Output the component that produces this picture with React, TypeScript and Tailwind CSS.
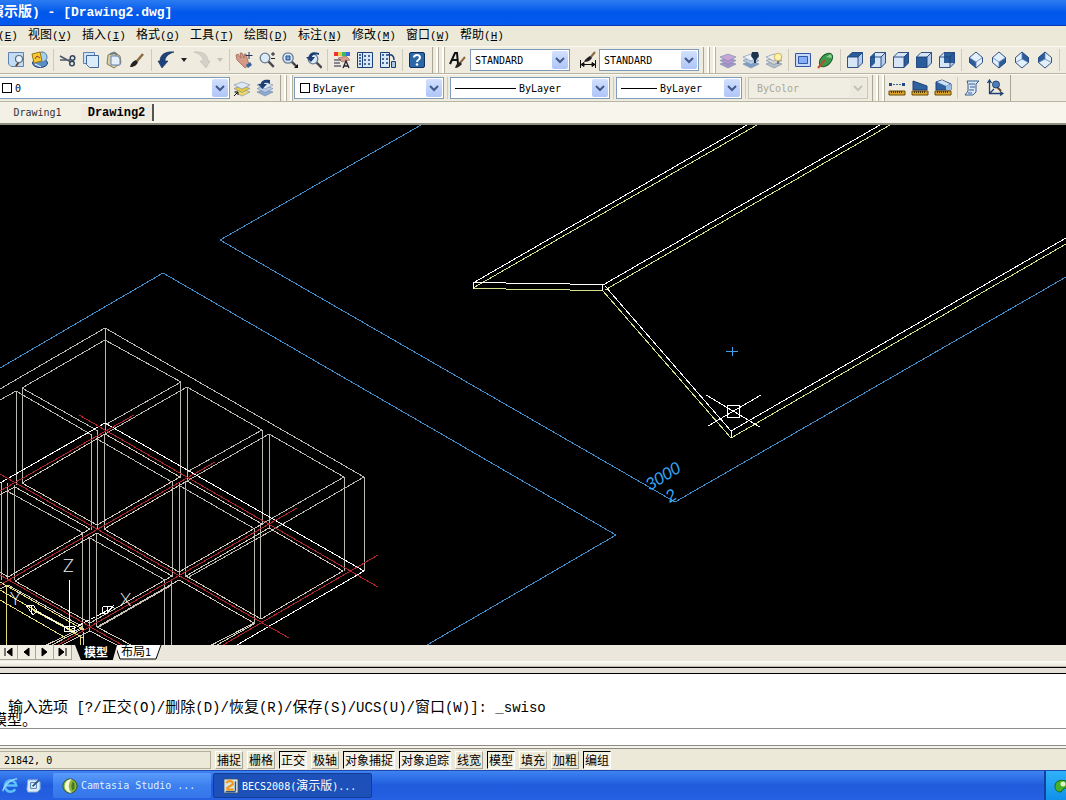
import React from "react";

const MONO = "font-['DejaVu_Sans_Mono','Noto_Sans_CJK_SC',monospace]";

/** Text that sets Chinese runs in their own size next to half-width Latin. */
function Mix({ text, cjk }: { text: string; cjk: string }) {
  return (
    <>
      {text.split(/([\u3000-\u9fff]+)/).map((part, i) =>
        i % 2 ? (
          <span key={i} className={cjk}>
            {part}
          </span>
        ) : (
          part
        ),
      )}
    </>
  );
}

const NAVY = "#1c3f78";
const STEEL = "#5d83b4";
const PALE = "#d6e6f6";
const DARK = "#2b5c9b";

function Cube({ face }: { face: string }) {
  return (
    <>
      <path d="M1.500 6 6 1.500H16.500V12L12 16.500H1.500Z" fill={PALE} />
      <path d="M12 6 16.500 1.500V12L12 16.500Z" fill={face === "right" ? DARK : "#b3cdea"} />
      {face === "top" && <path d="M1.500 6 6 1.500H16.500L12 6Z" fill={DARK} />}
      {face === "left" && <path d="M1.500 6 6 1.500V12L1.500 16.500Z" fill={DARK} />}
      {face === "front" && <path d="M1.500 6H12V16.500H1.500Z" fill={DARK} />}
      {face === "back" && <path d="M6 1.500H16.500V12H6Z" fill={DARK} />}
      <path
        d="M1.500 6 6 1.500H16.500V12L12 16.500H1.500ZM1.500 6H12V16.500M12 6 16.500 1.500"
        fill="none"
        stroke={NAVY}
        strokeWidth=".9"
      />
    </>
  );
}

function Iso({ face }: { face: string }) {
  return (
    <>
      <path d="M9 1 15.500 6.500V11.500L9 17 2.500 11.500V6.500Z" fill="#e3effa" />
      {face === "sw" && <path d="M2.500 7 9 11V17L2.500 11.500Z" fill={DARK} />}
      {face === "se" && <path d="M15.500 7 9 11V17L15.500 11.500Z" fill={DARK} />}
      {face === "ne" && <path d="M9 1 15.500 6.500V11.500L9 8Z" fill={DARK} />}
      {face === "nw" && <path d="M9 1 2.500 6.500V11.500L9 8Z" fill={DARK} />}
      {face[0] === "s" ? (
        <path d="M2.500 6.500 9 11 15.500 6.500M9 11V17" fill="none" stroke={STEEL} strokeWidth=".8" />
      ) : (
        <path d="M2.500 11.500 9 8 15.500 11.500M9 1V8" fill="none" stroke={STEEL} strokeWidth=".8" />
      )}
      <path d="M9 1 15.500 6.500V11.500L9 17 2.500 11.500V6.500Z" fill="none" stroke={NAVY} strokeWidth=".9" />
    </>
  );
}

function Stack({ a, b, c }: { a: string; b: string; c: string }) {
  return (
    <g stroke="#6f86ac" strokeWidth=".6">
      <path d="M1 13 9 10 17 13 9 17Z" fill={c} />
      <path d="M1 9.500 9 6.500 17 9.500 9 13.500Z" fill={b} />
      <path d="M1 6 9 3 17 6 9 10Z" fill={a} />
    </g>
  );
}

function Ruler() {
  return (
    <>
      <path d="M1 12H17V16H1Z" fill="#d9a52a" stroke="#6b4a08" />
      <path d="M3.500 12V14M5.500 12V14M7.500 12V14M9.500 12V14M11.500 12V14M13.500 12V14" stroke="#4f3604" />
    </>
  );
}

function Lens({ cx, cy, r }: { cx: number; cy: number; r: number }) {
  return (
    <>
      <path d={`M${cx + r * 0.7} ${cy + r * 0.7} L${cx + r + 4} ${cy + r + 4}`} stroke="#4a4a52" strokeWidth="2.400" />
      <circle cx={cx} cy={cy} r={r} fill="#dbeaf8" stroke="#6c7d92" strokeWidth="1.300" />
    </>
  );
}

const ICONS: Record<string, React.ReactNode> = {
  "Plot preview": (
    <>
      <path d="M1.500 1.500H16.500V15.500H4L1.500 13Z" fill="#c3dcf3" stroke={STEEL} />
      <path d="M12 11 9 15" stroke="#6a4526" strokeWidth="2" />
      <circle cx="12" cy="8" r="3.500" fill="#eaf4fd" stroke="#5a6d86" strokeWidth="1.200" />
    </>
  ),
  Publish: (
    <>
      <ellipse cx="10" cy="12" rx="7.500" ry="4.500" fill="#5b8fc8" stroke={NAVY} />
      <circle cx="12" cy="6" r="5" fill="#a8d2ea" stroke="#4a7aa8" />
      <path d="M2 3 10 1 12 10 4 12Z" fill="#f3c934" stroke="#957414" />
      <path d="M5 8 7 5 10 7" fill="none" stroke="#a13a20" />
      <path d="M5 13 11 16" stroke="#fff" />
    </>
  ),
  Cut: (
    <>
      <path d="M1 5 12 11M1 9H11" stroke="#505a68" strokeWidth="1.500" />
      <circle cx="13.500" cy="7" r="2.300" fill="none" stroke="#33445f" strokeWidth="1.500" />
      <circle cx="13" cy="12.500" r="2.300" fill="none" stroke="#33445f" strokeWidth="1.500" />
    </>
  ),
  Copy: (
    <>
      <path d="M1.500 1.500H12.500V12.500H1.500Z" fill="#cfe3f6" stroke={STEEL} />
      <path d="M4.500 4.500H16.500V16.500H7.500L4.500 13.500Z" fill="#dcebf9" stroke="#41699c" />
    </>
  ),
  Paste: (
    <>
      <path d="M3 4 9 1 15 5 16 12 9 17 2 13Z" fill="#d8cfa4" stroke="#8a7d52" />
      <path d="M6 5H13L15 8V14H6Z" fill="#e3eef8" stroke={STEEL} />
      <path d="M5 3 10 2 12 4" stroke="#6c7c8c" strokeWidth="2" fill="none" />
    </>
  ),
  "Match properties": (
    <>
      <path d="M9 10 15 3" stroke="#8c6a42" strokeWidth="2.500" />
      <path d="M2 16C3 12 5 10 8 9L10 11C9 14 6 16 2 16Z" fill="#222" />
    </>
  ),
  Undo: <path d="M17 1C8 0 3 4 3 10H1L5 17 11 10H8C8 6 11 3 17 1Z" fill="#20427c" stroke="#142c58" strokeWidth=".6" />,
  Redo: <path d="M1 1C10 0 15 4 15 10H17L13 17 7 10H10C10 6 7 3 1 1Z" fill="#d4d2c8" stroke="#bebcb1" strokeWidth=".6" />,
  Pan: (
    <>
      <path
        d="M1 4 3 3 6 7 5 2 7 2 9 7 9 3 11 3 13 10 14 14 10 17 6 13 2 9Z"
        fill="#d49a86"
        stroke="#9a5f50"
        strokeWidth=".7"
      />
      <path d="M11 14 15 11 17 14 13 17Z" fill="#34629e" />
      <path d="M14 1V8M10.500 4.500H17.500" stroke="#23395a" />
    </>
  ),
  "Zoom realtime": (
    <>
      <Lens cx={7} cy={7} r={4.8} />
      <path d="M15 1V5M13 3H17M13 7.500H17" stroke="#222" />
    </>
  ),
  "Zoom window": (
    <>
      <Lens cx={7} cy={7} r={5.2} />
      <path d="M5 5H9V9H5Z" fill="#7da4d6" stroke="#274f8c" />
      <path d="M17 13V17H13Z" fill="#111" />
    </>
  ),
  "Zoom previous": (
    <>
      <Lens cx={9} cy={8} r={4.8} />
      <path d="M15 2C9 0 5 2 5 6H2L7 11 11 6H8C8 4 11 3 15 4Z" fill={NAVY} />
    </>
  ),
  Properties: (
    <>
      <path d="M1 1H5V5H1Z" fill="#e33" />
      <path d="M5 1H9V5H5Z" fill="#ec4" />
      <path d="M9 1H13V5H9Z" fill="#3b6" />
      <path d="M13 1H17V5H13Z" fill="#46d" />
      <path d="M5 7 13 5 17 9 9 11Z" fill="#d8a08c" stroke="#93604f" strokeWidth=".6" />
      <path d="M1 9H8M1 12H7M1 15H8" stroke="#667" strokeWidth="1.500" />
      <path d="M10 17 13 10 16 17M11 15H15" stroke="#223" strokeWidth="1.300" fill="none" />
    </>
  ),
  "Design center": (
    <>
      <path d="M1.500 1.500H16.500V16.500H1.500Z" fill="#d9e9f8" stroke={NAVY} />
      <path d="M6.500 2V16" stroke={NAVY} />
      <path
        d="M3 4H5M3 7H5M3 10H5M3 13H5M8 5H10M12 5H14M8 9H10M12 9H14M8 13H10M12 13H14"
        stroke={NAVY}
        strokeWidth="1.500"
      />
    </>
  ),
  "Tool palettes": (
    <>
      <path d="M1.500 1.500H10.500V16.500H1.500Z" fill="#d9e9f8" stroke={NAVY} />
      <path d="M3 4H5M3 8H5M3 12H5M7 4H9M7 8H9M7 12H9" stroke={NAVY} strokeWidth="1.500" />
      <path d="M9 4C13 3 15 5 15 9" fill="none" stroke={NAVY} strokeWidth="1.500" />
      <path d="M12.500 10.500H16.500V16.500H12.500Z" fill="#a8c6e6" stroke={NAVY} />
    </>
  ),
  Help: (
    <>
      <rect x="1.500" y="1.500" width="15" height="15" rx="1.500" fill="#2a66a8" stroke="#12315e" />
      <path d="M6 6.500C6 3 12 3 12 6.500C12 9 9 8.500 9 11" fill="none" stroke="#fff" strokeWidth="2" />
      <circle cx="9" cy="13.500" r="1.300" fill="#fff" />
    </>
  ),
  "Text style": (
    <>
      <path d="M2 13 7 2H9L10 13M4 9H10" fill="none" stroke="#111" strokeWidth="2" />
      <path d="M12 12 17 6" stroke="#8c6a42" strokeWidth="2" />
      <path d="M7 17C8 13 10 12 12 11L14 13C12 15 10 17 7 17Z" fill="#222" />
    </>
  ),
  "Dimension style": (
    <>
      <path
        d="M1.500 9V17M16.500 9V17M2 13.500H16M2 13.500 5 11.500V15.500ZM16 13.500 13 11.500V15.500Z"
        fill="#111"
        stroke="#111"
      />
      <path d="M11 7 16 1" stroke="#8c6a42" strokeWidth="2" />
      <path d="M5 11C6 8 8 7 11 5L13 7C11 10 8 11 5 11Z" fill="#222" />
    </>
  ),
  "Layer manager": <Stack a="#c9a6d8" b="#b795cf" c="#a994c8" />,
  "Layer freeze": (
    <>
      <Stack a="#eef3f8" b="#b9cde2" c="#7f9fc6" />
      <path d="M10 1H16L17 5 14 9V12H12V9L9 5Z" fill="#1d3350" />
    </>
  ),
  "Layer on": (
    <>
      <Stack a="#f0eee6" b="#d6d6d0" c="#b9bfc8" />
      <circle cx="13" cy="6" r="3.800" fill="#fdf3a8" stroke="#b59a3c" strokeWidth=".7" />
      <path d="M12 10H14V13H12Z" fill="#777" />
    </>
  ),
  "Named views": (
    <>
      <path d="M1.500 2.500H16.500V15.500H1.500Z" fill="#c7d9f8" stroke="#3556a5" />
      <path d="M4.500 5.500H13.500V12.500H4.500Z" fill="#86aef5" stroke="#3556a5" />
    </>
  ),
  Render: (
    <>
      <ellipse cx="9" cy="9" rx="8" ry="5" transform="rotate(-45 9 9)" fill="#3d9a4c" stroke="#1d5b2a" />
      <path d="M1 17 8 9" stroke="#b4502c" strokeWidth="2" />
      <path d="M9 6 14 3 15 7" fill="#8ed48e" />
    </>
  ),
  "Top view": <Cube face="top" />,
  "Left view": <Cube face="left" />,
  "Right view": <Cube face="right" />,
  "Front view": <Cube face="front" />,
  "Back view": <Cube face="back" />,
  "SW isometric": <Iso face="sw" />,
  "SE isometric": <Iso face="se" />,
  "NE isometric": <Iso face="ne" />,
  "NW isometric": <Iso face="nw" />,
  "Make layer current": (
    <>
      <Stack a="#dfe8f2" b="#e8c93a" c="#f0dc66" />
      <path d="M1 17 5 13M2 13H5V16" stroke="#111" fill="none" />
    </>
  ),
  "Layer previous": (
    <>
      <Stack a="#dfe8f2" b="#b9cde2" c="#8dabce" />
      <path d="M14 1C8 0 5 2 5 5H2L6.500 10 11 5H8C8 4 11 3 14 5Z" fill={NAVY} />
    </>
  ),
  Distance: (
    <>
      <path d="M2 5.500H16" stroke="#3a68a0" strokeDasharray="2 1" />
      <path d="M1 4H4V7H1ZM14 4H17V7H14Z" fill="#234a80" />
      <Ruler />
    </>
  ),
  Area: (
    <>
      <path d="M2 2 16 7V11H2Z" fill="#2f639f" stroke={NAVY} />
      <Ruler />
    </>
  ),
  "Mass properties": (
    <>
      <path d="M2 3 8 1 17 5V11H2Z" fill="#2f639f" stroke={NAVY} />
      <path d="M3 3 8 1 16 5 12 7Z" fill="#cfe2f4" />
      <path d="M12 7 17 5V11H12Z" fill="#9dbfe2" />
      <Ruler />
    </>
  ),
  List: (
    <>
      <path d="M4 2H16L13 5V13L10 16H2L5 12V5Z" fill="#dbe8f5" stroke="#355f93" />
      <path d="M6 5H12M7 8H12M6 11H11M5 14H9" stroke="#355f93" />
    </>
  ),
  "Locate point": (
    <>
      <path
        d="M3.500 2V14.500H17M1.500 4 3.500 1 5.500 4M14 12.500 17 14.500 14 16.500M3.500 14.500 8 10"
        fill="none"
        stroke={NAVY}
        strokeWidth="1.300"
      />
      <path d="M11 8 15 12" stroke="#6a4526" strokeWidth="2" />
      <circle cx="10" cy="5.500" r="3.500" fill="#4f7fb8" stroke={NAVY} />
    </>
  ),
};

function Tool({ name }: { name: string }) {
  return (
    <button type="button" aria-label={name} className="flex h-[22px] w-[23px] shrink-0 items-center justify-center">
      <svg viewBox="0 0 18 18" className="size-[18px]">
        {ICONS[name]}
      </svg>
    </button>
  );
}

function Tools({ names }: { names: string[] }) {
  return (
    <>
      {names.map((n) => (
        <Tool key={n} name={n} />
      ))}
    </>
  );
}

function Sep() {
  return (
    <span className="flex w-[6px] shrink-0 justify-center">
      <span className="h-[22px] w-px bg-[#cfcbbb]" />
    </span>
  );
}

function Grip() {
  return (
    <span className="flex h-full w-[17px] shrink-0 gap-[3px] pl-[4px]">
      <span className="h-full w-px bg-[#a9a594]" />
      <span className="h-full w-[3px] border-r border-[#b5b1a0] bg-[#fffef8]" />
      <span className="h-full w-[3px] border-r border-[#b5b1a0] bg-[#fffef8]" />
    </span>
  );
}

function Drop({ label, color }: { label: string; color: string }) {
  return (
    <button type="button" aria-label={label} className={`flex w-[13px] shrink-0 justify-center ${color}`}>
      <svg viewBox="0 0 6 4" className="h-[4px] w-[6px]">
        <path d="M0 0H6L3 4Z" fill="currentColor" />
      </svg>
    </button>
  );
}

function Combo({
  label,
  value,
  width,
  swatch,
  line,
  disabled,
}: {
  label: string;
  value: string;
  width: string;
  swatch?: boolean;
  line?: string;
  disabled?: boolean;
}) {
  return (
    <div
      className={`flex h-[22px] shrink-0 items-center border p-px ${width} ${
        disabled ? "border-[#c9c7ba] bg-[#f0eee2] pl-[5px]" : "border-[#7f9db9] bg-white"
      }`}
    >
      {swatch && <span className="ml-[4px] size-[10px] shrink-0 border border-black" />}
      {line && <span className={`ml-[3px] h-px shrink-0 bg-black ${line}`} />}
      <select
        aria-label={label}
        disabled={disabled}
        className={`h-full min-w-0 flex-1 appearance-none bg-transparent pl-[3px] text-[10px] outline-none ${
          disabled ? "text-[#aaa899] opacity-100" : "text-black"
        }`}
      >
        <option>{value}</option>
      </select>
      <span
        className={`pointer-events-none flex h-full w-[16px] shrink-0 items-center justify-center rounded-[2px] ${
          disabled ? "bg-[#eceadf] text-[#c6c3b4]" : "bg-gradient-to-b from-[#d3e0fd] to-[#aec5f7] text-[#3f5a8c]"
        }`}
      >
        <svg viewBox="0 0 10 7" className="h-[7px] w-[10px]">
          <path d="M1 1 5 5 9 1" fill="none" stroke="currentColor" strokeWidth="2" />
        </svg>
      </span>
    </div>
  );
}

const MENUS: [string, string][] = [
  ["编辑", "E"],
  ["视图", "V"],
  ["插入", "I"],
  ["格式", "O"],
  ["工具", "T"],
  ["绘图", "D"],
  ["标注", "N"],
  ["修改", "M"],
  ["窗口", "W"],
  ["帮助", "H"],
];

/** Column grid nodes of the plan, two oblique directions. */
const node = (i: number, j: number): [number, number] => [
  Math.round(105 + 81.8 * i - 89.5 * j),
  Math.round(430 + 47 * i + 49.3 * j),
];
const NODES: Record<string, [number, number]> = {
  "0,1": [15, 483],
  "1,1": [97, 529],
  "2,1": [179, 576],
  "3,1": [261, 623],
  "1,2": [8, 581],
  "2,2": [90, 627],
};
const at = (i: number, j: number) => NODES[`${i},${j}`] ?? node(i, j);
const CELLS = [
  [0, 0],
  [1, 0],
  [2, 0],
  [0, 1],
  [1, 1],
  [2, 1],
  [1, 2],
  [2, 2],
];

function Drawing() {
  return (
    <svg
      role="img"
      aria-label="Isometric model"
      viewBox="0 125 1066 520"
      preserveAspectRatio="xMinYMin slice"
      className="block h-full w-full"
      fill="none"
      shapeRendering="crispEdges"
    >
      <g stroke="#3f8ecb">
        <path d="M421 125 220 240 675 502 1066 277" />
        <path d="M0 368 163 273 616 535 427 645" />
        <path d="M726 351.500H738M732.500 347V356" stroke="#3fa0ea" />
      </g>
      <g stroke="#d9e08c">
        <path d="M473 288 757 125M605 290 890 125M1066 244 731 438 603 291" />
        <path d="M473 288.500H506M506 289.500H570M570 290.500H603" />
      </g>
      <g stroke="#ffffff">
        <path d="M473 283 747 125M603 285 880 125M1066 238 731 431 605 286" />
        <path d="M473 282.500H506M506 283.500H570M570 284.500H603M473.500 282V289M602.500 284V291M731.500 431V438" />
        <path d="M727.500 405.500H739.500V417.500H727.500ZM706 395 760 427M708 426 761 395" />
      </g>

      <g stroke="#b9b9b2">
        <path d="M0 389 105 328 364 477 269 532M105 340 22 388M105 340 181 382M0 400 16 391" />
        <path d="M22 388 98 431M16 391 92 435M181 382 105 425M187 387 105 434M187 387 262 430 187 472" />
        <path d="M269 434 344 477 262 524M269 434 187 481M97 439 172 482M7 491 83 533" />
        <path d="M90 538 165 580M180 486 255 529M269 532 187 578M172 585 97 628M89 432 0 483" />
        <path d="M105.500 328V435M22.500 388V482M16.500 391V485M180.500 382V478M187.500 387V480M262.500 430V525M269.500 434V528M344.500 477V571M364.500 477V571" />
        <path d="M91.500 434V530M97.500 430V530M104.500 434V530M82.500 533V629M89.500 538V632M96.500 533V627M1.500 483V580M7.500 483V580M14.500 485V580" />
        <path d="M172.500 482V577M179.500 482V577M185.500 482V577M254.500 529V624M260.500 525V619M164.500 580V645M171.500 580V645" />
      </g>
      <g stroke="#cfcabc">
        {CELLS.map(([i, j]) => {
          const [tx, ty] = at(i, j);
          const [rx, ry] = at(i + 1, j);
          const [bx, by] = at(i + 1, j + 1);
          const [lx, ly] = at(i, j + 1);
          return (
            <path
              key={`${i},${j}`}
              d={`M${tx} ${ty + 4}L${rx - 7} ${ry}L${bx} ${by - 4}L${lx + 7} ${ly}Z`}
            />
          );
        })}
        <path d="M254 624 217 645M84 628 52 645" />
      </g>
      <path d="M0 483 105 423 364 571 237 645" stroke="#fff" />
      <g stroke="#b3242c">
        <path d="M79 415 378 587M0 474 289 638M0 575 122 645" />
        <path d="M134 415 0 491M215 462 0 585M297 508 58 645M378 555 223 645" />
      </g>
      <g stroke="#e6df7c">
        <path d="M6.500 586V645M0 582 84 630M0 590 83 638M0 600 66 638M83.500 632V645M80.500 637V645" />
        <path d="M32 609 76 633" strokeWidth="2" />
      </g>
      <g stroke="#fff">
        <path d="M69.500 580V630M64.500 626.500H74.500V631.500H64.500Z" />
        <path d="M72 629 114 607" strokeDasharray="5 2" />
        <path d="M113 606 103 607 102 613 107 613ZM107 606 108 612M68 629 36 611M26 605 34 606 37 611 33 615ZM31 605 32 613" />
      </g>
      <g fill="#f0f0f0" fontFamily="Lato" fontWeight="300" fontSize="18" shapeRendering="auto">
        <text x="63" y="572">Z</text>
        <text x="120" y="606">X</text>
        <text x="10" y="605">Y</text>
      </g>
      <g fill="#35a5f5" fontFamily="Liberation Sans" fontStyle="italic" fontSize="17">
        <text transform="translate(650 491) rotate(-32)">3000</text>
        <text transform="translate(670 503) rotate(-32)">2</text>
      </g>
    </svg>
  );
}

const NAV: [string, string][] = [
  ["First layout", "M2 1V9M9 1V9L4 5Z"],
  ["Previous layout", "M8 1V9L3 5Z"],
  ["Next layout", "M3 1V9L8 5Z"],
  ["Last layout", "M9 1V9M2 1V9L7 5Z"],
];

const MODES: [string, boolean][] = [
  ["捕捉", false],
  ["栅格", false],
  ["正交", true],
  ["极轴", false],
  ["对象捕捉", true],
  ["对象追踪", true],
  ["线宽", false],
  ["模型", true],
  ["填充", false],
  ["加粗", false],
  ["编组", true],
];

export default function App() {
  return (
    <div className={`flex h-screen min-h-[420px] flex-col overflow-hidden bg-[#ece9d8] text-[10px] text-black ${MONO}`}>
      <header className="shrink-0">
        <h1 className="-ml-[12px] flex h-[26px] items-center overflow-hidden border-b border-[#0a3bb5] bg-gradient-to-b from-[#2b7bf2] via-[#0058ea] to-[#0458ee] pl-[2px] whitespace-pre font-['Liberation_Mono','Noto_Sans_CJK_SC',monospace] text-[13px] font-bold leading-[26px] text-white">
          <span>
            <Mix text="演示版) - [Drawing2.dwg]" cjk="text-[14px]" />
          </span>
        </h1>
        <nav className="-ml-[26px] flex h-[20px] items-center overflow-hidden">
          {MENUS.map(([name, key]) => (
            <button
              key={key}
              type="button"
              className="w-[54px] shrink-0 whitespace-nowrap text-left font-['Liberation_Mono','Noto_Sans_CJK_SC',monospace] text-[11px] leading-[18px]"
            >
              <span className="text-[12px]">{name}</span>(<u>{key}</u>)
            </button>
          ))}
        </nav>

        <div className="flex h-[28px] items-center overflow-hidden border-t border-b border-t-[#fbfaf4] border-b-[#b9b5a4] bg-[#efebde] pl-[4px]">
          <Tools names={["Plot preview", "Publish"]} />
          <Sep />
          <Tools names={["Cut", "Copy", "Paste", "Match properties"]} />
          <Sep />
          <Tool name="Undo" />
          <Drop label="Undo list" color="text-[#222]" />
          <Tool name="Redo" />
          <Drop label="Redo list" color="text-[#c6c3b4]" />
          <Sep />
          <Tools names={["Pan", "Zoom realtime", "Zoom window", "Zoom previous"]} />
          <Sep />
          <Tools names={["Properties", "Design center", "Tool palettes"]} />
          <Sep />
          <Tool name="Help" />
          <Grip />
          <Tool name="Text style" />
          <span className="w-[2px] shrink-0" />
          <Combo label="Text style" value="STANDARD" width="w-[100px]" />
          <span className="w-[6px] shrink-0" />
          <Tool name="Dimension style" />
          <Combo label="Dimension style" value="STANDARD" width="w-[100px]" />
          <Grip />
          <Tools names={["Layer manager", "Layer freeze", "Layer on"]} />
          <Sep />
          <Tools names={["Named views", "Render"]} />
          <Sep />
          <Tools names={["Top view", "Left view", "Right view", "Front view", "Back view"]} />
          <Sep />
          <Tools names={["SW isometric", "SE isometric", "NE isometric", "NW isometric"]} />
          <Sep />
        </div>

        <div className="-ml-[4px] flex h-[28px] items-center overflow-hidden border-t border-b border-t-[#fbfaf4] border-b-[#b9b5a4] bg-[#efebde]">
          <Combo label="Layer" value="0" width="w-[234px]" swatch />
          <Tools names={["Make layer current", "Layer previous"]} />
          <Grip />
          <span className="w-px shrink-0" />
          <Combo label="Color" value="ByLayer" width="w-[150px]" swatch />
          <Sep />
          <Combo label="Linetype" value="ByLayer" width="w-[160px]" line="w-[61px]" />
          <Sep />
          <Combo label="Lineweight" value="ByLayer" width="w-[126px]" line="w-[36px]" />
          <Sep />
          <Combo label="Plot style" value="ByColor" width="w-[120px]" disabled />
          <Grip />
          <Tools names={["Distance", "Area", "Mass properties"]} />
          <Sep />
          <Tools names={["List", "Locate point"]} />
          <span className="ml-[4px] h-full w-px bg-[#a9a594]" />
        </div>

        <div className="flex h-[23px] items-stretch border-b-2 border-[#8f8c80] bg-[#f8f5ec]">
          <button type="button" className="w-[81px] bg-[#f3f0e6] pr-[6px] text-[#333]">
            Drawing1
          </button>
          <button
            type="button"
            className="my-[2px] w-[73px] border-r-2 border-[#555] bg-[#efebdf] text-center font-['Liberation_Mono',monospace] text-[12px] font-bold leading-[18px]"
          >
            Drawing2
          </button>
        </div>
      </header>

      <main className="min-h-0 flex-1 overflow-hidden bg-black">
        <Drawing />
      </main>

      <footer className="shrink-0">
        <div className="flex h-[16px] items-start bg-[#ece7dc]">
          <div className="flex w-[75px] shrink-0">
            {NAV.map(([label, d]) => (
              <button
                key={label}
                type="button"
                aria-label={label}
                className="flex h-[15px] w-[18px] items-center justify-center border-r border-b border-[#aaa697] bg-[#f1eee4]"
              >
                <svg viewBox="0 0 11 10" className="h-[10px] w-[11px]">
                  <path d={d} fill="#000" stroke="#000" />
                </svg>
              </button>
            ))}
          </div>
          <button
            type="button"
            className="h-[15px] w-[42px] bg-black text-[12px] font-bold leading-[14px] text-white [clip-path:polygon(0_0,100%_0,90%_100%,14%_100%)]"
          >
            模型
          </button>
          <button type="button" className="grid h-[15px] w-[46px]">
            <svg viewBox="0 0 46 15" className="col-start-1 row-start-1 h-[15px] w-[46px]">
              <path d="M-2 0 3 14H39L44 0" fill="#fff" stroke="#000" />
            </svg>
            <span className="col-start-1 row-start-1 whitespace-nowrap pr-[8px] text-center leading-[14px]">
              <Mix text="布局1" cjk="text-[12px]" />
            </span>
          </button>
        </div>
        <div className="h-[6px] border-b border-[#bbb6ac] bg-gradient-to-b from-[#fdfcf6] to-[#ece7dc]" />
        <div className="h-[7px] border-y border-black bg-[#e4e0d8]" />
        <div className="flex h-[54px] flex-col justify-end overflow-hidden whitespace-pre bg-white font-['Liberation_Mono','Noto_Sans_CJK_SC',monospace] text-[14px] leading-[13px]">
          <p className="ml-[8px]">
            <Mix text="输入选项 [?/正交(O)/删除(D)/恢复(R)/保存(S)/UCS(U)/窗口(W)]: _swiso" cjk="text-[15px]" />
          </p>
          <p className="-ml-[8px]">
            <Mix text="模型。" cjk="text-[15px]" />
          </p>
        </div>
        <input
          aria-label="Command line"
          className="block h-[17px] w-full border-t border-[#8e8e8e] bg-white px-2 text-[12px] outline-none"
        />
        <div className="h-[4px] border-y border-[#8e8b82] bg-[#f6f4ec]" />

        <div className="flex h-[21px] items-center gap-[4px] overflow-hidden pt-px">
          <span className="h-[18px] w-[211px] shrink-0 border border-l-0 border-[#b3af9f] pl-[4px] leading-[18px]">
            21842, 0
          </span>
          {MODES.map(([name, on]) => (
            <button
              key={name}
              type="button"
              aria-pressed={on}
              className={`h-[18px] shrink-0 border text-[12px] leading-[18px] whitespace-nowrap ${
                name.length > 2 ? "w-[52px]" : "w-[28px]"
              } ${
                on
                  ? "border-t-black border-r-white border-b-white border-l-black bg-[#f4f1e6]"
                  : "border-t-white border-r-[#aaa697] border-b-[#aaa697] border-l-white"
              }`}
            >
              {name}
            </button>
          ))}
        </div>

        <div className="flex h-[30px] items-stretch overflow-hidden border-t border-[#1e49b5] bg-gradient-to-b from-[#3f83f2] via-[#1f5bdc] to-[#2561e2] text-white">
          <div className="flex w-[53px] shrink-0 items-center gap-[6px] pl-[2px]">
            <button type="button" aria-label="Internet Explorer">
              <svg viewBox="0 0 18 18" className="size-[17px]" fill="none">
                <path d="M14 13A6 6 0 1 1 15 9H4" stroke="#5cc0fa" strokeWidth="2.800" />
                <path d="M1 15C1 10 10 2 16 2" stroke="#a6dcfb" strokeWidth="1.300" />
              </svg>
            </button>
            <button type="button" aria-label="Show desktop">
              <svg viewBox="0 0 18 18" className="size-[17px]">
                <path d="M3 3H14L16 6V13L13 16H3L2 13Z" fill="#dcebf7" stroke="#7aa6d6" />
                <path d="M6 6H12V12H6Z" fill="#fff" stroke="#3574b5" />
                <path d="M8 10 15 3" stroke="#2c568f" strokeWidth="2" />
              </svg>
            </button>
          </div>
          <button
            type="button"
            className="my-[2px] flex w-[158px] shrink-0 items-center gap-[3px] rounded-[2px] bg-gradient-to-b from-[#5a9bfa] via-[#3c80f0] to-[#3576ea] pl-[9px] text-[#dff0ff]"
          >
            <svg viewBox="0 0 18 18" className="size-[16px]">
              <circle cx="9" cy="9" r="8" fill="#88b83a" stroke="#2c4d16" />
              <path d="M11 1A8 8 0 0 0 11 17A11 11 0 0 1 11 1Z" fill="#f5f8d8" />
              <path d="M12 4C10 7 10 11 12 14L14 12V6Z" fill="#4f7424" />
            </svg>
            Camtasia Studio ...
          </button>
          <button
            type="button"
            className="my-[2px] ml-[2px] flex w-[159px] shrink-0 items-center gap-[3px] whitespace-nowrap rounded-[2px] border border-[#123d94] bg-[#1d50b8] pl-[9px]"
          >
            <svg viewBox="0 0 18 18" className="size-[16px]">
              <path d="M1 1H17V17H1Z" fill="#d9e3e6" stroke="#2c3f5c" />
              <path d="M4 6C5 2 12 3 11 7L5 11V13H12" stroke="#f09a1c" strokeWidth="2.500" fill="none" />
              <path d="M14 4V15M3 15.500H14" stroke="#28548c" strokeWidth="1.500" />
            </svg>
            <span>
              <Mix text="BECS2008(演示版)..." cjk="text-[12px]" />
            </span>
          </button>
          <div className="ml-auto flex w-[22px] shrink-0 items-center overflow-hidden border-l-2 border-[#12429e] bg-gradient-to-b from-[#2fb0f8] to-[#0f90ea] pl-[8px]">
            <svg viewBox="0 0 16 14" className="h-[14px] w-[16px] shrink-0">
              <path d="M1 7C1 1 9 0 14 3L15 10 10 9 7 13C3 13 1 11 1 7Z" fill="#46b02c" stroke="#17690f" />
              <circle cx="9" cy="5" r="2.500" fill="#dff5c8" />
            </svg>
          </div>
        </div>
      </footer>
    </div>
  );
}
